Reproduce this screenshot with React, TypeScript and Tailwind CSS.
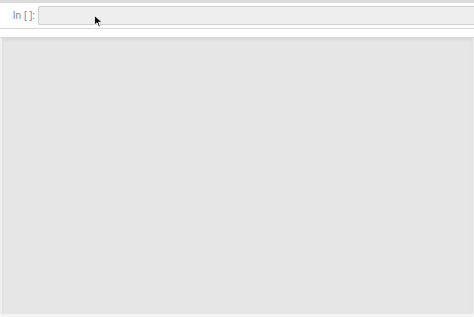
import React from "react";

const Cursor: React.FC = () => (
  <svg width="9" height="13" viewBox="0 0 9 13" className="absolute left-[55px] top-[8px]">
    <path d="M0.5 0.5 L0.5 10 L3 7.8 L4.8 12 L6.3 11.3 L4.6 7.3 L8 7.3 Z" fill="#111" stroke="#fff" strokeWidth="0.8" />
  </svg>
);

export default function App() {
  return (
    <div className="w-[474px] h-[317px] bg-white flex flex-col overflow-hidden" style={{ fontFamily: '"Liberation Sans", Arial, sans-serif' }}>
      <div className="h-[3px] bg-[#dcdcdc] shrink-0" />
      <div className="flex items-center h-[23px] pt-[2px] pb-[1px] shrink-0">
        <div className="w-[38px] pr-[3px] text-right text-[10px] text-[#7d8694]">In [ ]:</div>
        <div className="relative flex-1 h-[19px] bg-[#eeeeee] border border-[#d0d0d0] rounded-l-[2px] border-r-0">
          <Cursor />
        </div>
      </div>
      <div className="h-[1px] mt-[2px] bg-[#d8d8d8] shrink-0" />
      <div className="h-[8px] bg-white shrink-0" />
      <div className="flex-1 flex border-t border-[#d6d6d6]">
        <div className="w-[2px] bg-[#f0f0f0]" />
        <div className="flex-1 bg-[#e6e6e6] shadow-[inset_0_2px_3px_rgba(0,0,0,0.06)]" />
        <div className="w-[1px] bg-[#f0f0f0]" />
      </div>
      <div className="h-[3px] bg-[#f5f5f5] shrink-0" />
    </div>
  );
}
